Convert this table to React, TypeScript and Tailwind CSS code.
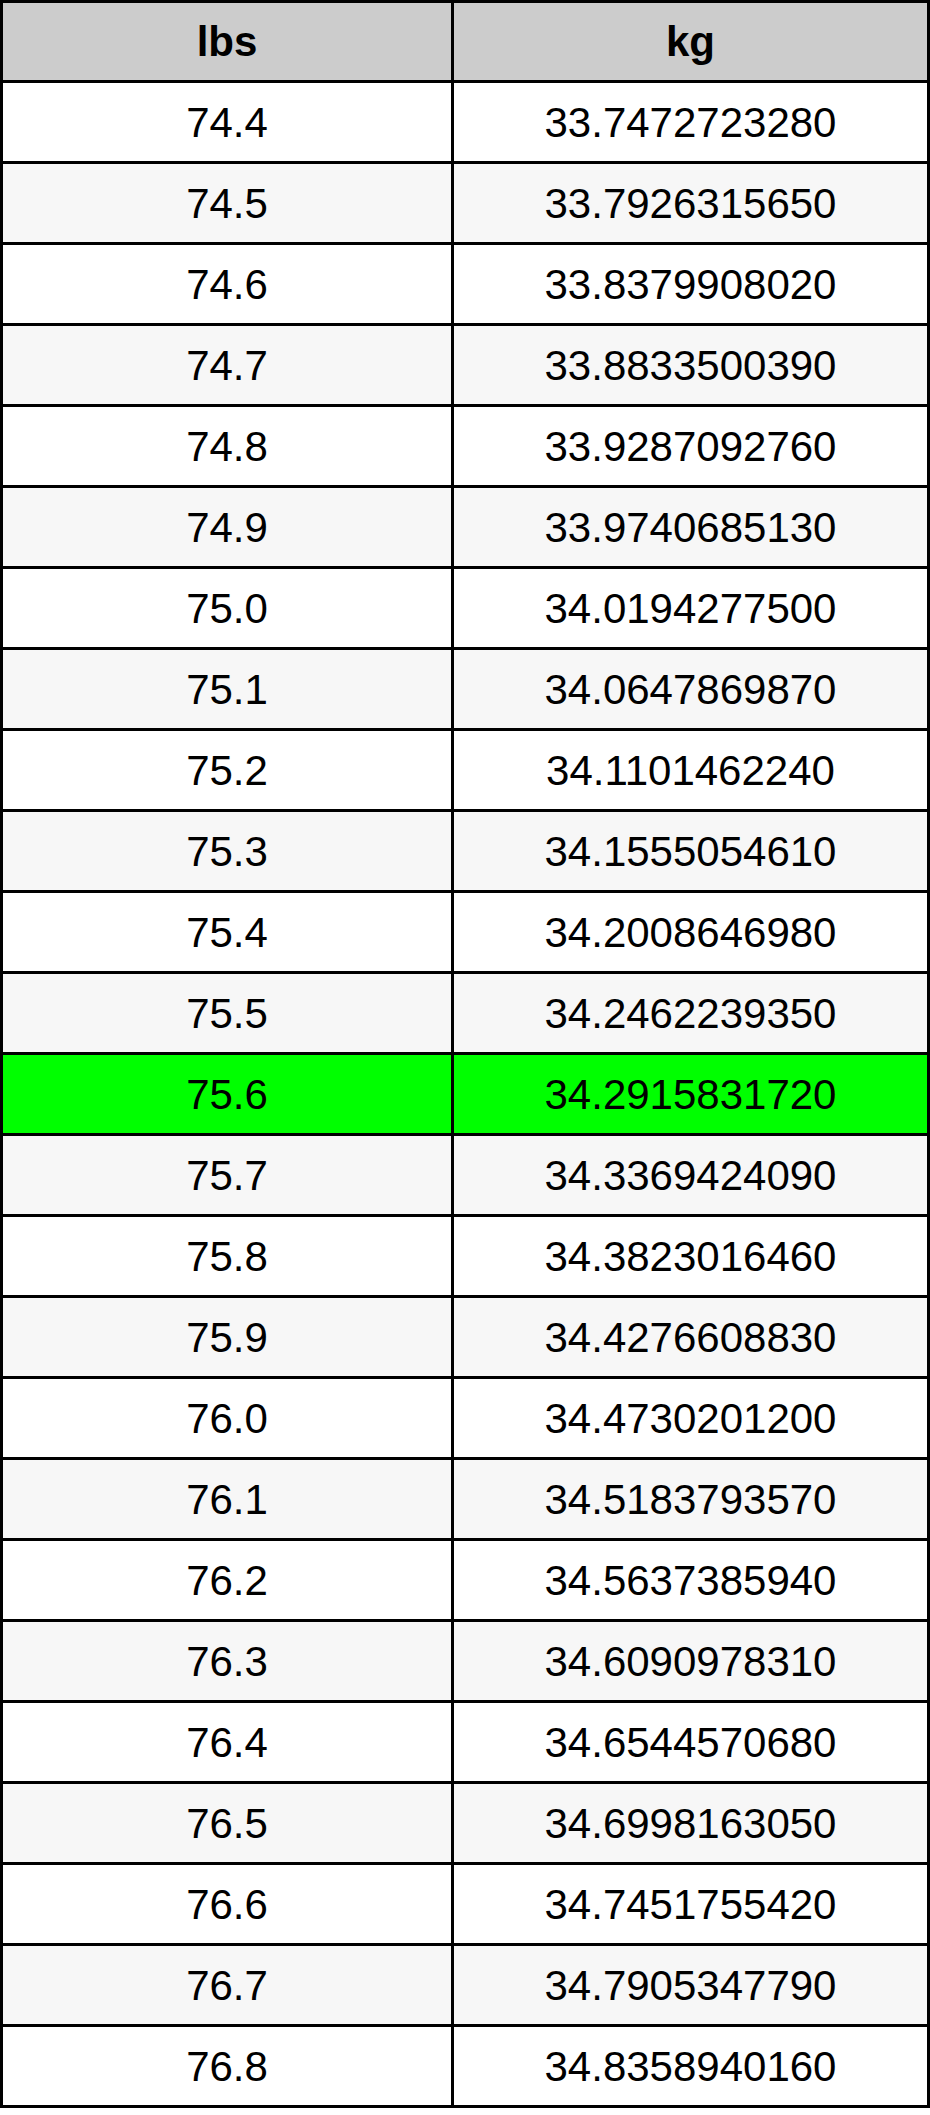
import React from "react";

const rows: [string, string][] = [
  ["74.4", "33.7472723280"],
  ["74.5", "33.7926315650"],
  ["74.6", "33.8379908020"],
  ["74.7", "33.8833500390"],
  ["74.8", "33.9287092760"],
  ["74.9", "33.9740685130"],
  ["75.0", "34.0194277500"],
  ["75.1", "34.0647869870"],
  ["75.2", "34.1101462240"],
  ["75.3", "34.1555054610"],
  ["75.4", "34.2008646980"],
  ["75.5", "34.2462239350"],
  ["75.6", "34.2915831720"],
  ["75.7", "34.3369424090"],
  ["75.8", "34.3823016460"],
  ["75.9", "34.4276608830"],
  ["76.0", "34.4730201200"],
  ["76.1", "34.5183793570"],
  ["76.2", "34.5637385940"],
  ["76.3", "34.6090978310"],
  ["76.4", "34.6544570680"],
  ["76.5", "34.6998163050"],
  ["76.6", "34.7451755420"],
  ["76.7", "34.7905347790"],
  ["76.8", "34.8358940160"],
];

const HIGHLIGHT = "75.6";

const App = () => {
  return (
    <div className="w-[930px] bg-white font-['Liberation_Sans',Arial,sans-serif] text-black">
      <div className="grid grid-cols-[448px_473px] gap-[3px] bg-black p-[3px]">
        <div className="flex h-[77px] items-center justify-center bg-[#cccccc] text-[42px] font-bold">
          lbs
        </div>
        <div className="flex h-[77px] items-center justify-center bg-[#cccccc] text-[42px] font-bold">
          kg
        </div>
        {rows.map(([lbs, kg], i) => {
          const bg =
            lbs === HIGHLIGHT
              ? "bg-[#00ff00]"
              : i % 2 === 1
              ? "bg-[#f7f7f7]"
              : "bg-white";
          return (
            <React.Fragment key={lbs}>
              <div
                className={`flex h-[78px] items-center justify-center text-[42px] ${bg}`}
              >
                {lbs}
              </div>
              <div
                className={`flex h-[78px] items-center justify-center text-[42px] ${bg}`}
              >
                {kg}
              </div>
            </React.Fragment>
          );
        })}
      </div>
    </div>
  );
};

export default App;
